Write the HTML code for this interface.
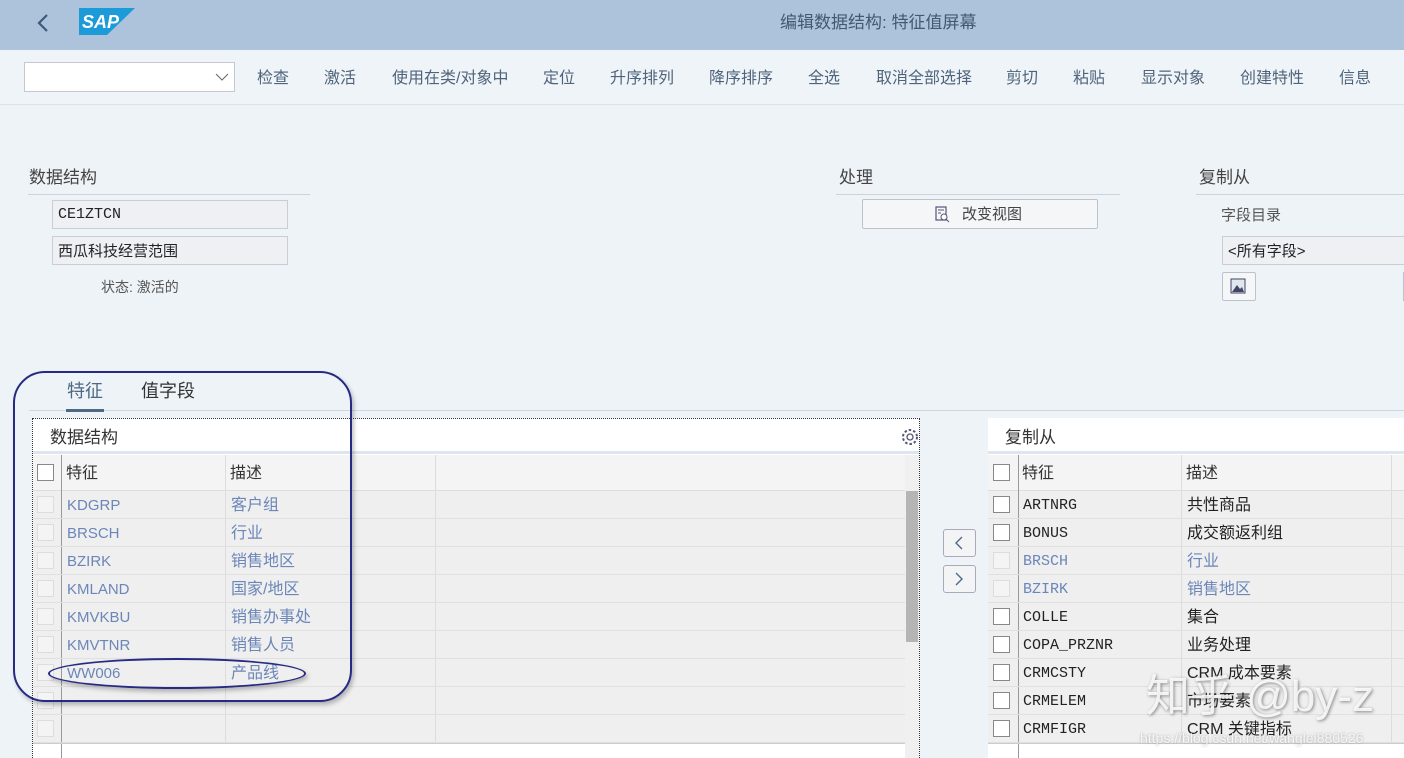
<!DOCTYPE html>
<html><head><meta charset="utf-8"><style>
*{margin:0;padding:0;box-sizing:border-box}
body{width:1404px;height:758px;overflow:hidden;background:#eef3f8;font-family:"Liberation Sans","Noto Sans CJK SC",sans-serif;position:relative;color:#333;line-height:20px}
.a{position:absolute;white-space:nowrap}
.mono{font-family:"Liberation Mono","Noto Sans CJK SC",monospace}
.tb{top:69px;font-size:16px;color:#4f647a}
.cb{position:absolute;width:17px;height:17px;border:1.5px solid #888;background:#fff}
.cbd{border-color:#ddd;background:#f4f4f4}
.lt{color:#6b86b8}
.rt{line-height:28px}
</style></head><body>
<div class="a" style="left:0;top:0;width:1404px;height:50px;background:#adc3dc"></div>
<svg class="a" style="left:36px;top:12px" width="14" height="22"><path d="M11 3 L3 11 L11 19" stroke="#3d5a7a" stroke-width="2.2" fill="none"/></svg>
<svg class="a" style="left:79px;top:8px" width="56" height="27"><polygon points="0,0 56,0 28,27 0,27" fill="#1d9ad8"/><text x="3" y="20" font-family="Liberation Sans" font-weight="bold" font-style="italic" font-size="18" fill="#fff">SAP</text></svg>
<div class="a" style="left:780px;top:13px;font-size:17px;color:#44596f">编辑数据结构: 特征值屏幕</div>
<div class="a" style="left:0;top:50px;width:1404px;height:55px;background:#eff4f9;border-bottom:1px solid #dde3ea"></div>
<div class="a" style="left:24px;top:62px;width:211px;height:30px;background:#fff;border:1px solid #c3c9cf"></div>
<svg class="a" style="left:215px;top:73px" width="14" height="9"><path d="M1 1 L7 7 L13 1" stroke="#666" fill="none"/></svg>
<div class="a tb" style="left:257px">检查</div>
<div class="a tb" style="left:324px">激活</div>
<div class="a tb" style="left:392px">使用在类/对象中</div>
<div class="a tb" style="left:543px">定位</div>
<div class="a tb" style="left:610px">升序排列</div>
<div class="a tb" style="left:709px">降序排序</div>
<div class="a tb" style="left:808px">全选</div>
<div class="a tb" style="left:876px">取消全部选择</div>
<div class="a tb" style="left:1006px">剪切</div>
<div class="a tb" style="left:1073px">粘贴</div>
<div class="a tb" style="left:1141px">显示对象</div>
<div class="a tb" style="left:1240px">创建特性</div>
<div class="a tb" style="left:1339px">信息</div>
<div class="a" style="left:29px;top:168px;font-size:17px;color:#444">数据结构</div>
<div class="a" style="left:28px;top:194px;width:282px;border-top:1px solid #ccd3da"></div>
<div class="a mono" style="left:52px;top:200px;width:236px;height:29px;background:#eef0f3;border:1px solid #c9ced4;padding:4px 5px;font-size:15px;color:#222">CE1ZTCN</div>
<div class="a" style="left:52px;top:236px;width:236px;height:29px;background:#eef0f3;border:1px solid #c9ced4;padding:5px 5px;font-size:15px;color:#222">西瓜科技经营范围</div>
<div class="a" style="left:101px;top:277px;font-size:14px;color:#555">状态: 激活的</div>
<div class="a" style="left:839px;top:168px;font-size:17px;color:#444">处理</div>
<div class="a" style="left:836px;top:194px;width:284px;border-top:1px solid #ccd3da"></div>
<div class="a" style="left:862px;top:199px;width:236px;height:30px;background:#f5f6f8;border:1px solid #bcc3ca;border-radius:2px"></div>
<svg class="a" style="left:934px;top:206px" width="16" height="17"><rect x="2" y="1" width="10" height="13" fill="none" stroke="#557" stroke-width="1.2"/><path d="M4 4h6M4 7h3" stroke="#557"/><circle cx="10" cy="11" r="3" fill="#fff" stroke="#557"/><path d="M12 13l3 3" stroke="#557"/></svg>
<div class="a" style="left:962px;top:205px;font-size:15px;color:#444">改变视图</div>
<div class="a" style="left:1199px;top:168px;font-size:17px;color:#444">复制从</div>
<div class="a" style="left:1196px;top:194px;width:208px;border-top:1px solid #ccd3da"></div>
<div class="a" style="left:1221px;top:206px;font-size:15px;color:#555">字段目录</div>
<div class="a" style="left:1222px;top:236px;width:190px;height:29px;background:#eef0f3;border:1px solid #c9ced4;padding:5px 5px;font-size:15px;color:#222">&lt;所有字段&gt;</div>
<div class="a" style="left:1222px;top:272px;width:34px;height:29px;background:#f5f6f8;border:1px solid #bcc3ca;border-radius:2px"></div>
<svg class="a" style="left:1230px;top:278px" width="16" height="16"><rect x="1" y="1" width="14" height="14" fill="#dfe7ef" stroke="#446"/><path d="M2 14 L7 7 L10 11 L12 9 L14 14Z" fill="#446"/></svg>
<div class="a" style="left:1403px;top:272px;width:4px;height:29px;border:1px solid #bcc3ca"></div>
<div class="a" style="left:67px;top:381px;font-size:18px;color:#4d6985">特征</div>
<div class="a" style="left:141px;top:381px;font-size:18px;color:#333">值字段</div>
<div class="a" style="left:29px;top:410px;width:1375px;border-top:1px solid #cdd8e4"></div>
<div class="a" style="left:66px;top:409px;width:38px;height:3px;background:#4d6985"></div>
<div class="a" style="left:32px;top:418px;width:888px;height:340px;background:#fff;border:1px dotted #333;border-bottom:none"></div>
<div class="a" style="left:50px;top:428px;font-size:17px;color:#333">数据结构</div>
<svg class="a" style="left:900px;top:427px" width="20" height="20"><circle cx="10" cy="10" r="3" fill="none" stroke="#557" stroke-width="1.3"/><circle cx="10" cy="10" r="7" fill="none" stroke="#557" stroke-width="2" stroke-dasharray="2.5 2"/></svg>
<div class="a" style="left:33px;top:451px;width:886px;height:3px;background:#dde5ee"></div>
<div class="a" style="left:33px;top:455px;width:872px;height:36px;background:#f4f4f4;border-bottom:1px solid #ddd"></div>
<div class="cb" style="left:37px;top:464px"></div>
<div class="a" style="left:66px;top:464px;font-size:16px">特征</div>
<div class="a" style="left:230px;top:464px;font-size:16px">描述</div>
<div class="a" style="left:33px;top:491px;width:872px;height:252px;background:#efefef"></div>
<div class="a" style="left:905px;top:455px;width:14px;height:303px;background:#f0f0f0"></div>
<div class="a" style="left:906px;top:491px;width:12px;height:151px;background:#b5b5b5"></div>
<div class="a" style="left:61px;top:455px;height:303px;border-left:1px solid #999"></div>
<div class="a" style="left:225px;top:455px;height:288px;border-left:1px solid #ddd"></div>
<div class="a" style="left:435px;top:455px;height:288px;border-left:1px solid #ddd"></div>
<div class="a" style="left:33px;top:743px;width:872px;border-top:1px solid #ccc"></div>
<div id="lrows"></div>
<div class="a" style="left:943px;top:529px;width:33px;height:28px;border:1px solid #aab;border-radius:3px;background:#f3f4f6"></div>
<svg class="a" style="left:953px;top:535px" width="12" height="16"><path d="M9 2L3 8L9 14" stroke="#4b6a8a" fill="none" stroke-width="1.4"/></svg>
<div class="a" style="left:943px;top:565px;width:33px;height:28px;border:1px solid #aab;border-radius:3px;background:#f3f4f6"></div>
<svg class="a" style="left:953px;top:571px" width="12" height="16"><path d="M3 2L9 8L3 14" stroke="#4b6a8a" fill="none" stroke-width="1.4"/></svg>
<div class="a" style="left:988px;top:418px;width:416px;height:340px;background:#fff"></div>
<div class="a" style="left:1005px;top:428px;font-size:17px;color:#333">复制从</div>
<div class="a" style="left:988px;top:451px;width:416px;height:3px;background:#dde5ee"></div>
<div class="a" style="left:988px;top:455px;width:416px;height:36px;background:#f4f4f4;border-bottom:1px solid #ddd"></div>
<div class="cb" style="left:993px;top:464px"></div>
<div class="a" style="left:1022px;top:464px;font-size:16px">特征</div>
<div class="a" style="left:1186px;top:464px;font-size:16px">描述</div>
<div class="a" style="left:988px;top:491px;width:416px;height:252px;background:#efefef"></div>
<div class="a" style="left:1018px;top:455px;height:303px;border-left:1px solid #999"></div>
<div class="a" style="left:1181px;top:455px;height:288px;border-left:1px solid #ddd"></div>
<div class="a" style="left:1391px;top:455px;height:288px;border-left:1px solid #ddd"></div>
<div class="a" style="left:988px;top:743px;width:416px;border-top:1px solid #ccc"></div>
<div id="rrows"></div>
<script>
var L=[["KDGRP","客户组"],["BRSCH","行业"],["BZIRK","销售地区"],["KMLAND","国家/地区"],["KMVKBU","销售办事处"],["KMVTNR","销售人员"],["WW006","产品线"],["",""],["",""]];
var R=[["ARTNRG","共性商品",0],["BONUS","成交额返利组",0],["BRSCH","行业",1],["BZIRK","销售地区",1],["COLLE","集合",0],["COPA_PRZNR","业务处理",0],["CRMCSTY","CRM 成本要素",0],["CRMELEM","市场要素",0],["CRMFIGR","CRM 关键指标",0]];
var h="";
L.forEach(function(r,i){var y=491+28*i;
h+='<div class="a" style="left:33px;top:'+(y+27)+'px;width:872px;border-top:1px solid #e0e0e0"></div>';
h+='<div class="cb cbd" style="left:37px;top:'+(y+5)+'px"></div>';
h+='<div class="a lt rt" style="left:67px;top:'+(y+1)+'px;font-size:15px">'+r[0]+'</div>';
h+='<div class="a lt rt" style="left:231px;top:'+(y+1)+'px;font-size:16px">'+r[1]+'</div>';});
document.getElementById("lrows").outerHTML=h;h="";
R.forEach(function(r,i){var y=491+28*i;var col=r[2]?'#6b86b8':'#222';
h+='<div class="a" style="left:988px;top:'+(y+27)+'px;width:416px;border-top:1px solid #e0e0e0"></div>';
h+='<div class="cb'+(r[2]?' cbd':'')+'" style="left:993px;top:'+(y+5)+'px"></div>';
h+='<div class="a mono rt" style="left:1023px;top:'+(y+1)+'px;font-size:15px;color:'+col+'">'+r[0]+'</div>';
h+='<div class="a rt" style="left:1187px;top:'+(y+1)+'px;font-size:16px;color:'+col+'">'+r[1]+'</div>';});
document.getElementById("rrows").outerHTML=h;
</script>
<div class="a" style="left:13px;top:371px;width:339px;height:331px;border:2px solid #262a82;border-radius:32px;box-shadow:2px 3px 4px rgba(0,0,0,.25)"></div>
<div class="a" style="left:48px;top:658px;width:258px;height:31px;border:2px solid #262a82;border-radius:50%;box-shadow:2px 3px 4px rgba(0,0,0,.25)"></div>
<div class="a" style="left:1146px;top:672px;font-size:44px;line-height:50px;color:rgba(255,255,255,.85);text-shadow:1px 1px 3px rgba(0,0,0,.45)">知乎 @by-z</div>
<div class="a" style="left:1140px;top:728px;font-size:14px;color:rgba(255,255,255,.8);text-shadow:0 0 2px rgba(0,0,0,.3)">https://blog.csdn.net/wanglei880526</div>
</body></html>
